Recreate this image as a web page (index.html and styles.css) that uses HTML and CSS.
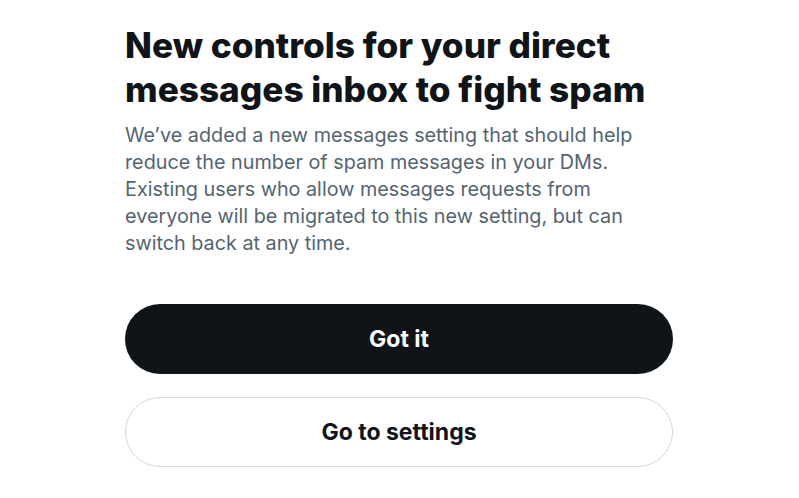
FILE: index.html
```html
<!DOCTYPE html>
<html>
<head>
<meta charset="utf-8">
<link rel="stylesheet" href="styles.css">
</head>
<body>
<div class="sheet">
  <h1 class="title">New controls for your direct messages inbox to fight spam</h1>
  <p class="desc">We’ve added a new messages setting that should help reduce the number of spam messages in your DMs. Existing users who allow messages requests from everyone will be migrated to this new setting, but can switch back at any time.</p>
  <div class="actions">
    <button class="btn btn-primary">Got it</button>
    <button class="btn btn-outline">Go to settings</button>
  </div>
</div>
</body>
</html>
```
FILE: styles.css
```css
html, body {
  margin: 0;
  padding: 0;
  background: #ffffff;
}
body {
  font-family: Inter, "Noto Sans", sans-serif;
  width: 799px;
  height: 498px;
  overflow: hidden;
}
.sheet {
  width: 548px;
  margin-left: 125px;
  padding-top: 23px;
}
.title {
  margin: 0;
  font-size: 35.2px;
  line-height: 44px;
  font-weight: 800;
  color: #0f1419;
  letter-spacing: 0;
}
.desc {
  margin: 11px 0 0 0;
  max-width: 525px;
  font-size: 19.8px;
  line-height: 27px;
  color: #536471;
  font-weight: 400;
}
.actions {
  margin-top: 47px;
  display: flex;
  flex-direction: column;
  gap: 23px;
}
.btn {
  height: 70px;
  border-radius: 35px;
  font-family: Inter, "Noto Sans", sans-serif;
  font-size: 23px;
  font-weight: 700;
  cursor: pointer;
}
.btn-primary {
  background: #0f1419;
  color: #ffffff;
  border: none;
}
.btn-outline {
  background: #ffffff;
  color: #0f1419;
  border: 1.5px solid #cfd9de;
}
```
